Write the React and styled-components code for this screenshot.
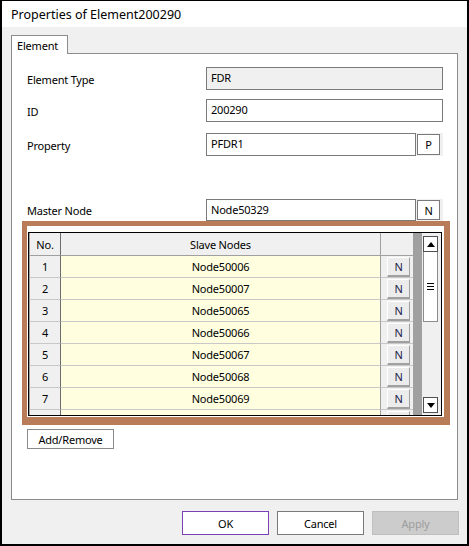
import React from 'react';
import styled, { createGlobalStyle } from 'styled-components';

const GlobalStyle = createGlobalStyle`
  * { box-sizing: border-box; }
  body {
    margin: 0;
    background: #fff;
    font-family: "Segoe UI", "Noto Sans", "Open Sans", sans-serif;
    color: #000;
  }
`;

const slaveNodes = [
  'Node50006',
  'Node50007',
  'Node50065',
  'Node50066',
  'Node50067',
  'Node50068',
  'Node50069',
];

const Window = styled.div`
  width: 469px;
  height: 546px;
  border: 2px solid #000;
  border-top-width: 1px;
  background: #f0f0f0;
  display: flex;
  flex-direction: column;
  font-size: 11px;
  letter-spacing: -0.2px;
`;

const TitleBar = styled.div`
  height: 26px;
  background: #fff;
  padding-left: 9px;
  display: flex;
  align-items: center;
  font-size: 12.5px;
  letter-spacing: 0;
`;

const Body = styled.div`
  padding: 8px 9px 0 9px;
  display: flex;
  flex-direction: column;
`;

const TabStrip = styled.div`
  display: flex;
`;

// the active tab sits over the panel's top border
const Tab = styled.div`
  position: relative;
  z-index: 1;
  width: 57px;
  height: 19px;
  margin-bottom: -1px;
  padding: 2px 0 0 5px;
  background: #fff;
  border: 1px solid #8c8c8c;
  border-bottom: none;
`;

const Panel = styled.div`
  height: 447px;
  background: #fff;
  border: 1px solid #8c8c8c;
  padding: 0 7px 0 10px;
  display: flex;
  flex-direction: column;
`;

const FieldRow = styled.div`
  display: grid;
  grid-template-columns: 179px auto;
  align-items: center;
  height: ${(p) => p.$h}px;
  margin-top: ${(p) => p.$top}px;
  padding-left: 5px;
`;

const Label = styled.span`
  padding-top: 1px;
`;

const Controls = styled.div`
  display: flex;
  height: 100%;
`;

const TextBox = styled.div`
  width: ${(p) => p.$w}px;
  height: 100%;
  border: 1px solid #7a7a7a;
  background: ${(p) => (p.$readOnly ? '#f0f0f0' : '#fff')};
  padding: 2px 4px 0;
  line-height: 16px;
`;

const PickFrame = styled.div`
  width: 27px;
  height: 100%;
  background: #f0f0f0;
  padding: 1px 3px 1px 1px;
`;

const PickButton = styled.div`
  width: 100%;
  height: 100%;
  background: #fff;
  border: 1px solid #7a7a7a;
  display: flex;
  align-items: center;
  justify-content: center;
`;

const Highlight = styled.div`
  width: 428px;
  border-style: solid;
  border-color: #b97c59;
  border-width: 5px 6px 8px 5px;
  padding: 6px 2px 1px 1px;
`;

const GridFrame = styled.div`
  height: 184px;
  border: 1px solid #000;
  display: flex;
  overflow: hidden;
`;

const Table = styled.div`
  width: 384px;
  display: flex;
  flex-direction: column;
`;

const Row = styled.div`
  display: grid;
  grid-template-columns: 32px 320px 32px;
  height: ${(p) => (p.$header ? 23 : 22)}px;
  flex-shrink: 0;
`;

const Cell = styled.div`
  display: flex;
  align-items: center;
  justify-content: center;
  border-bottom: 1px solid ${(p) => (p.$header ? '#a0a0a0' : '#c8c8c8')};
  background: ${(p) => p.$bg || '#f0f0f0'};
`;

const NoCell = styled(Cell)`
  border-left: 1px solid #a0a0a0;
  border-right: 1px solid #6d6d6d;
`;

const NodeCell = styled(Cell)`
  border-right: 1px solid #a0a0a0;
`;

const ButtonCell = styled(Cell)`
  justify-content: flex-start;
  align-items: flex-start;
  padding: 1px 0 0 6px;
`;

const RowButton = styled.div`
  width: 23px;
  height: 20px;
  background: #ececec;
  border-top: 1px solid #fff;
  border-left: 1px solid #fff;
  border-right: 1px solid #a0a0a0;
  border-bottom: 2px solid #a0a0a0;
  display: flex;
  align-items: center;
  justify-content: center;
  color: #1a1a4a;
`;

const Divider = styled.div`
  width: 9px;
  background: #a0a0a0;
`;

const ScrollBar = styled.div`
  width: 19px;
  background: #f0f0f0;
  padding: 3px 3px 2px 1px;
  display: flex;
  flex-direction: column;
`;

const ArrowBox = styled.div`
  height: 16px;
  background: #fff;
  border: 1px solid #505050;
  display: flex;
  align-items: center;
  justify-content: center;
`;

const Thumb = styled.div`
  height: 70px;
  background: #fff;
  border: 1px solid #8c8c8c;
  border-top: none;
  display: flex;
  flex-direction: column;
  align-items: center;
  justify-content: center;
  gap: 2px;
`;

const GripLine = styled.div`
  width: 7px;
  height: 1px;
  background: #000;
`;

const Track = styled.div`
  flex: 1;
`;

const AddRemove = styled.div`
  width: 87px;
  height: 20px;
  margin: 4px 0 0 5px;
  background: #fff;
  border: 1px solid #8a8a8a;
  display: flex;
  align-items: center;
  justify-content: center;
`;

const Footer = styled.div`
  display: flex;
  justify-content: flex-end;
  gap: 8px;
  padding-top: 11px;
  margin-right: -1px;
`;

const DialogButton = styled.div`
  width: 87px;
  height: 24px;
  display: flex;
  align-items: center;
  justify-content: center;
  background: ${(p) => (p.$disabled ? '#cccccc' : '#fff')};
  color: ${(p) => (p.$disabled ? '#9d9d9d' : '#000')};
  border: 1px solid
    ${(p) => (p.$focused ? '#7b40b8' : p.$disabled ? '#bfbfbf' : '#7a7a7a')};
`;

const Arrow = ({ down }) => (
  <svg width="8" height="5" viewBox="0 0 8 5">
    <polygon points={down ? '0,0 8,0 4,5' : '0,5 8,5 4,0'} fill="#000" />
  </svg>
);

const App = () => (
  <>
    <GlobalStyle />
    <Window>
      <TitleBar>Properties of Element200290</TitleBar>
      <Body>
        <TabStrip>
          <Tab>Element</Tab>
        </TabStrip>
        <Panel>
          <FieldRow $top={13} $h={23}>
            <Label>Element Type</Label>
            <Controls>
              <TextBox $w={237} $readOnly>FDR</TextBox>
            </Controls>
          </FieldRow>
          <FieldRow $top={9} $h={23}>
            <Label>ID</Label>
            <Controls>
              <TextBox $w={237}>200290</TextBox>
            </Controls>
          </FieldRow>
          <FieldRow $top={11} $h={23}>
            <Label>Property</Label>
            <Controls>
              <TextBox $w={210}>PFDR1</TextBox>
              <PickFrame>
                <PickButton>P</PickButton>
              </PickFrame>
            </Controls>
          </FieldRow>
          <FieldRow $top={43} $h={22}>
            <Label>Master Node</Label>
            <Controls>
              <TextBox $w={210}>Node50329</TextBox>
              <PickFrame>
                <PickButton>N</PickButton>
              </PickFrame>
            </Controls>
          </FieldRow>

          <Highlight>
            <GridFrame>
              <Table>
                <Row $header>
                  <NoCell $header>No.</NoCell>
                  <NodeCell $header>Slave Nodes</NodeCell>
                  <Cell $header />
                </Row>
                {slaveNodes.map((node, i) => (
                  <Row key={node}>
                    <NoCell>{i + 1}</NoCell>
                    <NodeCell $bg="#ffffe0">{node}</NodeCell>
                    <ButtonCell>
                      <RowButton>N</RowButton>
                    </ButtonCell>
                  </Row>
                ))}
                {/* next row peeking in under the last visible one */}
                <Row>
                  <NoCell />
                  <NodeCell $bg="#ffffe0" />
                  <ButtonCell>
                    <RowButton />
                  </ButtonCell>
                </Row>
              </Table>
              <Divider />
              <ScrollBar>
                <ArrowBox>
                  <Arrow />
                </ArrowBox>
                <Thumb>
                  <GripLine />
                  <GripLine />
                  <GripLine />
                </Thumb>
                <Track />
                <ArrowBox>
                  <Arrow down />
                </ArrowBox>
              </ScrollBar>
            </GridFrame>
          </Highlight>

          <AddRemove>Add/Remove</AddRemove>
        </Panel>
        <Footer>
          <DialogButton $focused>OK</DialogButton>
          <DialogButton>Cancel</DialogButton>
          <DialogButton $disabled>Apply</DialogButton>
        </Footer>
      </Body>
    </Window>
  </>
);

export default App;
